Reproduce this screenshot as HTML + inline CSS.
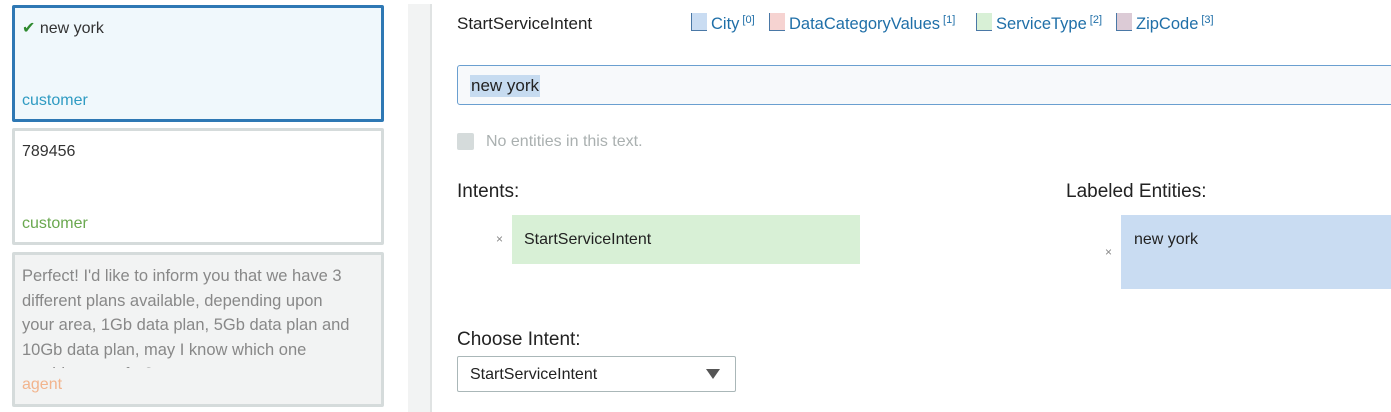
<!DOCTYPE html>
<html><head><meta charset="utf-8"><style>
*{margin:0;padding:0;box-sizing:border-box}
body{width:1391px;height:412px;overflow:hidden;background:#fff;font-family:"Liberation Sans",sans-serif;color:#222;position:relative}
.a{position:absolute;white-space:nowrap}
.card{position:absolute;left:12px;width:372px;border:3px solid #d5dbdb;border-radius:2px}
.sw{position:absolute;width:16px;height:18px;top:13px;border:1px solid #4a78a6;border-right:none;border-top:none}
.lk{color:#1f6fa8;font-size:16.5px;top:14px}
.lk sup{font-size:11px;vertical-align:6px;margin-left:3px}
</style></head><body>
<div class="card" style="top:5px;height:117px;border-color:#2e78b4;background:#f0f8fc"></div>
<div class="a" style="left:22px;top:18px;font-size:16px;color:#333"><span style="color:#2e8a2e">✔</span> new york</div>
<div class="a" style="left:22px;top:92px;font-size:16px;color:#2f9bc2">customer</div>

<div class="card" style="top:128px;height:117px;background:#fff"></div>
<div class="a" style="left:22px;top:143px;font-size:16px;color:#333">789456</div>
<div class="a" style="left:22px;top:215px;font-size:16px;color:#6aa84f">customer</div>

<div class="card" style="top:252px;height:155px;background:#f2f3f3"></div>
<div class="a" style="left:22px;top:264px;width:355px;height:104px;overflow:hidden;font-size:16.5px;line-height:24.5px;color:#888">Perfect! I'd like to inform you that we have 3<br>different plans available, depending upon<br>your area, 1Gb data plan, 5Gb data plan and<br>10Gb data plan, may I know which one<br>would you prefer?</div>
<div class="a" style="left:22px;top:376px;font-size:16px;color:#f2b48d">agent</div>

<div class="a" style="left:408px;top:4px;width:24px;height:408px;background:#f2f3f3;border-right:2px solid #e0e3e3"></div>

<div class="a" style="left:457px;top:14px;font-size:17px;color:#222">StartServiceIntent</div>
<div class="sw" style="left:691px;background:#c9dcf2"></div><div class="a lk" style="left:711px">City<sup>[0]</sup></div>
<div class="sw" style="left:769px;background:#f6d3d1"></div><div class="a lk" style="left:789px">DataCategoryValues<sup>[1]</sup></div>
<div class="sw" style="left:976px;background:#d8f0d6"></div><div class="a lk" style="left:996px">ServiceType<sup>[2]</sup></div>
<div class="sw" style="left:1116px;background:#dccbd6"></div><div class="a lk" style="left:1136px">ZipCode<sup>[3]</sup></div>

<div class="a" style="left:457px;top:65px;width:940px;height:40px;border:1px solid #6a9fd0;border-radius:3px;background:#f7f9fb"></div>
<div class="a" style="left:470px;top:75px;height:22px;padding:0 1px;background:#c6dbf0;font-size:17px;line-height:22px;color:#222">new york</div>

<div class="a" style="left:457px;top:133px;width:17px;height:17px;background:#d5dbdb;border-radius:2px"></div>
<div class="a" style="left:486px;top:133px;font-size:16px;color:#aab0b0">No entities in this text.</div>

<div class="a" style="left:457px;top:181px;font-size:19px;color:#222">Intents:</div>
<div class="a" style="left:496px;top:232px;font-size:12px;color:#888">×</div>
<div class="a" style="left:512px;top:215px;width:348px;height:49px;background:#d8f0d6"></div>
<div class="a" style="left:524px;top:231px;font-size:16px;color:#222">StartServiceIntent</div>

<div class="a" style="left:1066px;top:181px;font-size:19px;color:#222">Labeled Entities:</div>
<div class="a" style="left:1105px;top:245px;font-size:12px;color:#888">×</div>
<div class="a" style="left:1121px;top:215px;width:270px;height:74px;background:#c9dcf2"></div>
<div class="a" style="left:1134px;top:231px;font-size:16px;color:#222">new york</div>

<div class="a" style="left:457px;top:329px;font-size:19px;color:#222">Choose Intent:</div>
<div class="a" style="left:457px;top:356px;width:279px;height:36px;border:1px solid #aab7b8;border-radius:2px;background:#fff"></div>
<div class="a" style="left:470px;top:366px;font-size:16px;color:#222">StartServiceIntent</div>
<div class="a" style="left:706px;top:369px;width:0;height:0;border-left:7px solid transparent;border-right:7px solid transparent;border-top:10px solid #555"></div>
</body></html>
